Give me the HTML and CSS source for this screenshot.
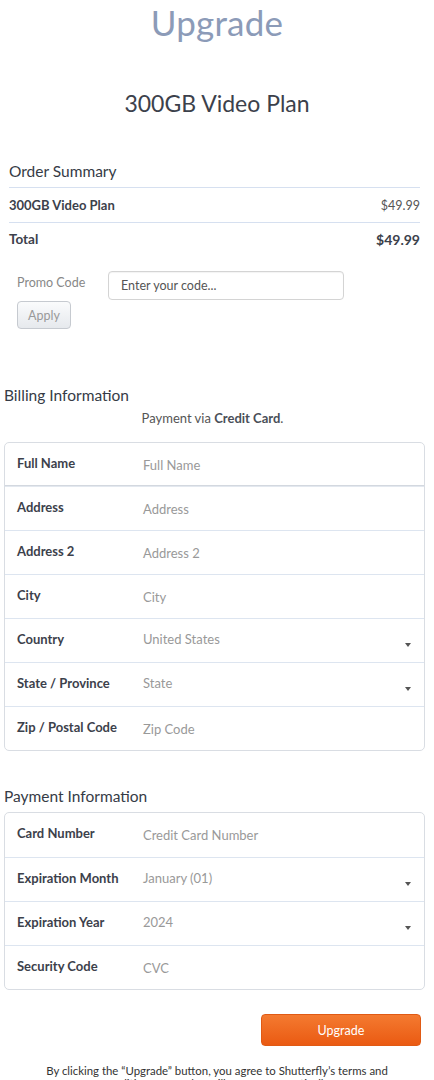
FILE: index.html
```html
<!DOCTYPE html>
<html>
<head>
<meta charset="utf-8">
<link rel="stylesheet" href="styles.css">
</head>
<body>
<div class="page">
  <h1 class="title">Upgrade</h1>
  <h2 class="plan">300GB Video Plan</h2>

  <section class="summary">
    <div class="sum-head">Order Summary</div>
    <div class="sum-row item"><span>300GB Video Plan</span><span class="price">$49.99</span></div>
    <div class="sum-row total"><span>Total</span><span>$49.99</span></div>
    <div class="promo">
      <span class="promo-label">Promo Code</span>
      <div class="promo-input">Enter your code...</div>
    </div>
    <button class="apply">Apply</button>
  </section>

  <section class="billing">
    <div class="sec-head">Billing Information</div>
    <div class="via">Payment via <b>Credit Card</b>.</div>
    <div class="form">
      <div class="row first"><span class="lbl">Full Name</span><span class="val">Full Name</span></div>
      <div class="row"><span class="lbl">Address</span><span class="val">Address</span></div>
      <div class="row"><span class="lbl">Address 2</span><span class="val">Address 2</span></div>
      <div class="row"><span class="lbl">City</span><span class="val">City</span></div>
      <div class="row sel"><span class="lbl">Country</span><span class="val">United States</span><span class="caret"></span></div>
      <div class="row sel"><span class="lbl">State / Province</span><span class="val">State</span><span class="caret"></span></div>
      <div class="row"><span class="lbl">Zip / Postal Code</span><span class="val">Zip Code</span></div>
    </div>
  </section>

  <section class="payment">
    <div class="sec-head">Payment Information</div>
    <div class="form">
      <div class="row"><span class="lbl">Card Number</span><span class="val">Credit Card Number</span></div>
      <div class="row sel"><span class="lbl">Expiration Month</span><span class="val">January (01)</span><span class="caret"></span></div>
      <div class="row sel"><span class="lbl">Expiration Year</span><span class="val">2024</span><span class="caret"></span></div>
      <div class="row"><span class="lbl">Security Code</span><span class="val">CVC</span></div>
    </div>
  </section>

  <div class="actions"><button class="upgrade">Upgrade</button></div>
  <p class="terms">By clicking the “Upgrade” button, you agree to Shutterfly’s terms and conditions. Your plan will renew automatically.</p>
</div>
</body>
</html>
```

FILE: styles.css
```css
* { box-sizing: border-box; }
html, body { margin: 0; padding: 0; background: #fff; }
body { font-family: Lato, "Noto Sans", sans-serif; color: #3b404a; }
.page { width: 434px; }

.title {
  margin: 0;
  height: 48px;
  padding-top: 1px;
  text-align: center;
  font-weight: 400;
  font-size: 35px;
  line-height: 42px;
  color: #8c9bb8;
  letter-spacing: 0.2px;
}
.plan {
  margin: 40px 0 0;
  height: 30px;
  text-align: center;
  font-weight: 400;
  font-size: 23px;
  line-height: 30px;
  color: #3c414b;
}

.summary { padding: 0 14px 0 9px; margin-top: 40px; }
.sum-head {
  font-size: 15.5px;
  line-height: 24px;
  height: 30px;
  padding-top: 1px;
  color: #363b46;
  border-bottom: 1px solid #d6e0f0;
}
.sum-row {
  display: flex;
  justify-content: space-between;
  align-items: center;
  height: 35px;
}
.item { font-size: 13px; font-weight: 700; color: #3c414b; border-bottom: 1px solid #d6e0f0; }
.item .price { font-weight: 400; color: #555; font-size: 12.5px; }
.total { font-size: 13.5px; font-weight: 700; color: #3c414b; height: 32px; }
.total span:last-child { font-size: 14px; }

.promo { display: flex; align-items: center; margin-top: 15px; padding-left: 8px; height: 30px; }
.promo-label { width: 91px; font-size: 12.5px; color: #888; margin-top: -6px; }
.promo-input {
  width: 236px; height: 29px;
  border: 1px solid #d4d4d4;
  border-radius: 4px;
  font-size: 12.5px; color: #555;
  padding: 6px 12px;
  box-shadow: inset 0 1px 1px rgba(0,0,0,0.05);
}
.apply {
  margin: 1px 0 0 8px;
  width: 54px; height: 28px;
  border: 1px solid #c6cad0;
  border-radius: 4px;
  background: linear-gradient(#fafbfc, #e6e9ed);
  font-family: inherit;
  font-size: 12.5px;
  color: #999;
  padding: 0;
}

.billing { margin-top: 55px; padding: 0 9px 0 4px; }
.sec-head { font-size: 15.5px; line-height: 22px; color: #363b46; height: 24px; }
.via { text-align: center; font-size: 13px; color: #555; height: 32px; line-height: 20px; padding-right: 4px; }
.via b { font-weight: 700; color: #4a4f58; }

.form {
  border: 1px solid #d9dde3;
  border-radius: 5px;
  margin-top: 2px;
}
.row {
  position: relative;
  display: flex;
  height: 44px;
  padding: 13px 12px 0;
  border-top: 1px solid #dde5f0;
}
.row:first-child { border-top: 0; }
.row.first { border-bottom: 1px solid #d3d8df; height: 43px; }
.row.first + .row { border-top: 1px solid #e3e8ef; }
.lbl { width: 126px; font-size: 13px; font-weight: 700; color: #3c414b; line-height: 15px; }
.val { font-size: 13px; color: #999; line-height: 15px; padding-top: 2px; }
.row.sel .val { padding-top: 0; }
.caret {
  position: absolute;
  right: 13px; top: 24px;
  width: 0; height: 0;
  border-left: 3.5px solid transparent;
  border-right: 3.5px solid transparent;
  border-top: 4px solid #555;
}

.payment { margin-top: 35px; padding: 0 9px 0 4px; }
.payment .sec-head { height: 26px; line-height: 20px; }
.payment .form { margin-top: 0; }

.actions { display: flex; justify-content: flex-end; padding-right: 13px; margin-top: 24px; }
.upgrade {
  width: 160px; height: 32px;
  border: 1px solid #e05a14;
  border-radius: 4px;
  background: linear-gradient(#f47a30, #ea5a12);
  color: #fff;
  font-family: inherit;
  font-size: 12.5px;
  padding: 0;
}
.terms {
  margin: 18px auto 0;
  width: 360px;
  text-align: center;
  font-size: 11.4px;
  line-height: 13px;
  color: #333;
}
```
